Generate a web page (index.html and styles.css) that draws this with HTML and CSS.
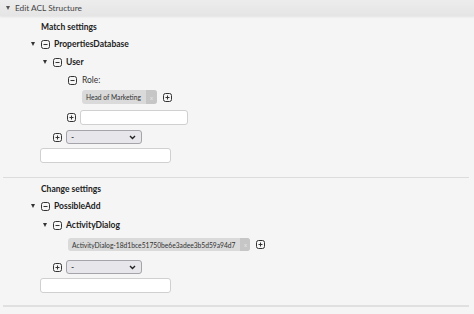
FILE: index.html
```html
<!DOCTYPE html>
<html lang="en">
<head>
    <meta charset="UTF-8">
    <title>Edit ACL Structure</title>
    <link rel="stylesheet" href="styles.css">
</head>
<body>

    <div class="widget">
        <div class="widget-head">
            <span class="tri"></span>
            <span>Edit ACL Structure</span>
        </div>

        <div class="widget-body">
            <div class="section">
                <div class="section-title">Match settings</div>

                <div class="row lvl1">
                    <span class="tri"></span>
                    <svg class="ico" viewBox="0 0 9 9"><rect x="0.5" y="0.5" width="8" height="8" rx="2"/><path d="M2.5 4.5h4"/></svg>
                    <span class="label">PropertiesDatabase</span>
                </div>

                <div class="row lvl2">
                    <span class="tri"></span>
                    <svg class="ico" viewBox="0 0 9 9"><rect x="0.5" y="0.5" width="8" height="8" rx="2"/><path d="M2.5 4.5h4"/></svg>
                    <span class="label">User</span>
                </div>

                <div class="row lvl3">
                    <svg class="ico" viewBox="0 0 9 9"><rect x="0.5" y="0.5" width="8" height="8" rx="2"/><path d="M2.5 4.5h4"/></svg>
                    <span class="plain">Role:</span>
                </div>

                <div class="row value-row">
                    <span class="tag">
                        <span class="tag-text">Head of Marketing</span>
                        <span class="tag-x">x</span>
                    </span>
                    <svg class="ico" viewBox="0 0 9 9"><rect x="0.5" y="0.5" width="8" height="8" rx="2"/><path d="M2.5 4.5h4M4.5 2.5v4"/></svg>
                </div>

                <div class="row add-value">
                    <svg class="ico" viewBox="0 0 9 9"><rect x="0.5" y="0.5" width="8" height="8" rx="2"/><path d="M2.5 4.5h4M4.5 2.5v4"/></svg>
                    <input type="text" class="text-in short">
                </div>

                <div class="row add-key">
                    <svg class="ico" viewBox="0 0 9 9"><rect x="0.5" y="0.5" width="8" height="8" rx="2"/><path d="M2.5 4.5h4M4.5 2.5v4"/></svg>
                    <div class="select"><span>-</span><svg viewBox="0 0 7 5"><path d="M1 1l2.5 2.5 2.5-2.5"/></svg></div>
                </div>

                <div class="row add-top">
                    <input type="text" class="text-in wide">
                </div>
            </div>

            <div class="section second">
                <div class="section-title">Change settings</div>

                <div class="row lvl1">
                    <span class="tri"></span>
                    <svg class="ico" viewBox="0 0 9 9"><rect x="0.5" y="0.5" width="8" height="8" rx="2"/><path d="M2.5 4.5h4"/></svg>
                    <span class="label">PossibleAdd</span>
                </div>

                <div class="row lvl2">
                    <span class="tri"></span>
                    <svg class="ico" viewBox="0 0 9 9"><rect x="0.5" y="0.5" width="8" height="8" rx="2"/><path d="M2.5 4.5h4"/></svg>
                    <span class="label">ActivityDialog</span>
                </div>

                <div class="row value-row inner">
                    <span class="tag">
                        <span class="tag-text">ActivityDialog-18d1bce51750be6e3adee3b5d59a94d7</span>
                        <span class="tag-x">x</span>
                    </span>
                    <svg class="ico" viewBox="0 0 9 9"><rect x="0.5" y="0.5" width="8" height="8" rx="2"/><path d="M2.5 4.5h4M4.5 2.5v4"/></svg>
                </div>

                <div class="row add-key">
                    <svg class="ico" viewBox="0 0 9 9"><rect x="0.5" y="0.5" width="8" height="8" rx="2"/><path d="M2.5 4.5h4M4.5 2.5v4"/></svg>
                    <div class="select"><span>-</span><svg viewBox="0 0 7 5"><path d="M1 1l2.5 2.5 2.5-2.5"/></svg></div>
                </div>

                <div class="row add-top">
                    <input type="text" class="text-in wide">
                </div>
            </div>
        </div>
    </div>

</body>
</html>
```

FILE: styles.css
```css
body {
    margin: 0;
    font-family: 'Lato', 'Liberation Sans', sans-serif;
    font-size: 8.5px;
    color: #333;
    background: #f5f5f5;
}

.widget {
    width: 474px;
    height: 314px;
    background: #f5f5f5;
}

.widget-head {
    height: 16px;
    display: flex;
    align-items: center;
    padding-left: 6px;
    background: linear-gradient(to bottom, #ededed, #e5e5e5);
    box-shadow: 0 1px 2px rgba(0, 0, 0, 0.08);
    color: #444;
    font-size: 8.3px;
}

.widget-body {
    padding: 0 5px 0 3px;
}

.section {
    border-bottom: 1px solid #dcdcdc;
    padding-bottom: 14px;
}

.section.second {
    border-bottom: 2px solid #e0e0e0;
    padding-bottom: 12px;
}

.section-title {
    font-weight: bold;
    color: #222;
    padding: 4px 0 0 38px;
    height: 14px;
    line-height: 14px;
}

.row {
    display: flex;
    align-items: center;
    height: 18px;
}

.tri {
    width: 0;
    height: 0;
    border-left: 2.5px solid transparent;
    border-right: 2.5px solid transparent;
    border-top: 4px solid #333;
    margin-right: 6px;
}

.widget-head .tri {
    margin-right: 5px;
    border-top-color: #555;
}

.ico {
    width: 9px;
    height: 9px;
    flex: none;
    fill: none;
    stroke: #333;
    stroke-width: 1;
}

.label {
    font-weight: bold;
    color: #222;
    margin-left: 4px;
}

.plain {
    margin-left: 5px;
    color: #333;
}

.lvl1 { padding-left: 28px; margin-top: 1px; }
.lvl2 { padding-left: 40px; }
.lvl3 { padding-left: 65px; }
.value-row { padding-left: 79px; height: 14px; margin-top: 1px; }
.value-row.inner { padding-left: 65px; height: 13px; margin-top: 4px; }
.second .lvl2 { margin-top: 1px; }
.add-value { padding-left: 64px; height: 15px; margin-top: 6px; }
.add-key { padding-left: 50px; height: 14px; margin-top: 5px; }
.second .add-key { margin-top: 9px; }
.add-top { padding-left: 37px; height: 15px; margin-top: 4px; }

.tag {
    display: flex;
    align-items: stretch;
    height: 100%;
    border-radius: 3px;
    background: #dadada;
    overflow: hidden;
    margin-right: 6px;
}

.tag-text {
    display: flex;
    align-items: center;
    padding: 0 5px 0 4px;
    font-size: 6.7px;
    color: #333;
}

.tag-x {
    display: flex;
    align-items: center;
    justify-content: center;
    width: 11px;
    background: #c6c6c6;
    color: #e4e4e4;
    font-size: 6px;
}

.inner .tag-x {
    width: 10px;
}

.text-in {
    box-sizing: border-box;
    height: 15px;
    margin: 0 0 0 4px;
    padding: 0;
    border: 1px solid #d0d0d0;
    border-radius: 3px;
    background: #fff;
}

.add-top .text-in {
    margin-left: 0;
}

.short { width: 108px; }
.wide { width: 131px; }

.select {
    box-sizing: border-box;
    width: 76px;
    height: 14px;
    margin-left: 4px;
    display: flex;
    align-items: center;
    justify-content: space-between;
    padding: 0 5px 0 4px;
    border: 1px solid #a4a4aa;
    border-radius: 3px;
    background: #e6e6eb;
    color: #222;
}

.select svg {
    width: 7px;
    height: 5px;
    fill: none;
    stroke: #222;
    stroke-width: 1.4;
}
```
